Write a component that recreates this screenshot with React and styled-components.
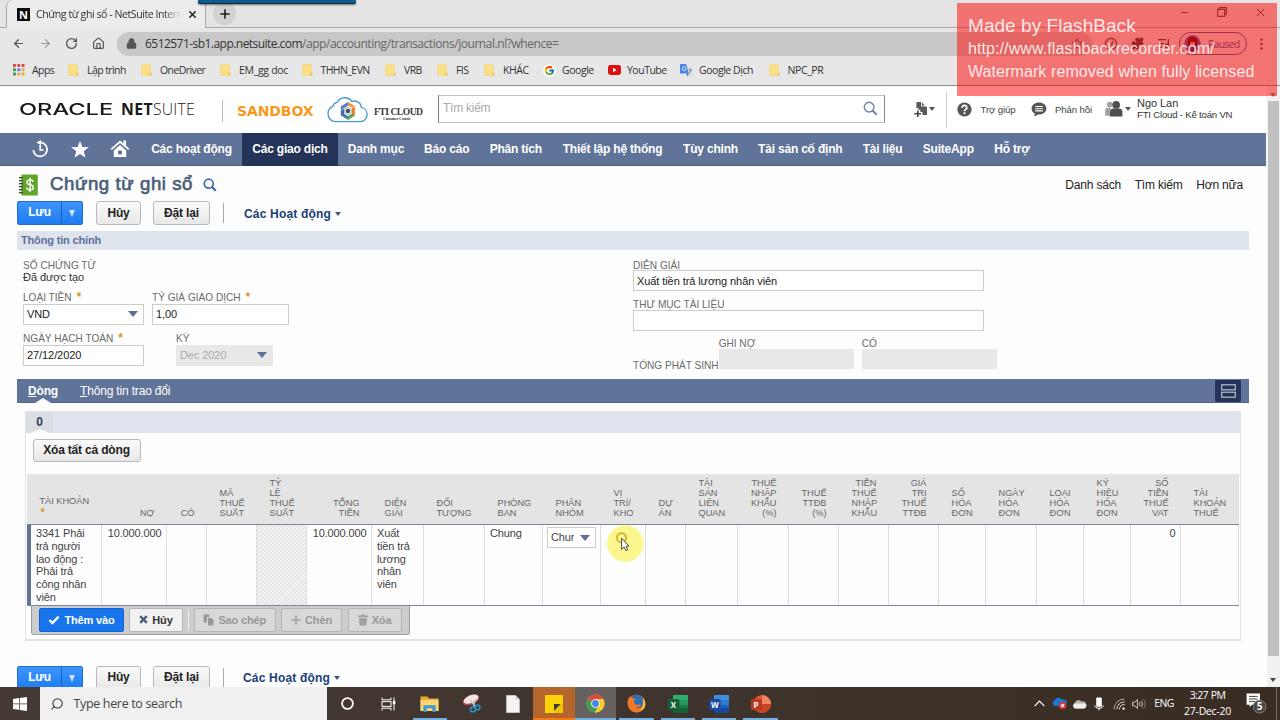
import React from 'react'
import styled, { createGlobalStyle } from 'styled-components'
import { ArrowLeft, ArrowRight, RotateCw, House, Lock, Plus, X, Star, Puzzle, ListMusic, Minus, Search } from 'lucide-react'
import { FcGoogle } from 'react-icons/fc'

const GlobalStyle = createGlobalStyle`
  * {
    box-sizing: border-box;
  }

  body {
    margin: 0;
    overflow: hidden;
    font-family: "Liberation Sans", Arial, sans-serif;
    font-size: 11px;
    color: #333;
    background-color: #fdfdfd;
  }

  svg {
    display: block;
    flex: none;
  }
`;

const Screen = styled.div`
  position: relative;
  width: 1280px;
  height: 720px;
  display: flex;
  flex-direction: column;
  overflow: hidden;
  white-space: nowrap;
`;

/* ---------- browser ---------- */

const Chrome = styled.div`
  height: 86px;
  flex: none;
  background-color: #e7e7e7;
  border-bottom: 1px solid #8c8c8c;
  font-family: "Open Sans", "Noto Sans", sans-serif;
  color: #333;
`;

const TabStrip = styled.div`
  height: 28px;
  display: flex;
  background-color: #e4e4e4;
`;

const StripLine = styled.div`
  width: ${(props) => props.$width};
  flex: ${(props) => (props.$width ? 'none' : 1)};
  display: flex;
  align-items: center;
  border-bottom: 1px solid #a9a9a9;
`;

const BrowserTab = styled.div`
  width: 200px;
  height: 28px;
  flex: none;
  display: flex;
  align-items: center;
  padding-left: 10px;
  border: 1px solid #a9a9a9;
  border-top: none;
  border-bottom: none;
  border-radius: 7px 7px 0 0;
  background-color: #ececec;
`;

const Favicon = styled.div`
  width: 13px;
  height: 13px;
  display: flex;
  align-items: center;
  justify-content: center;
  background-color: #0b0b0b;
  color: white;
  font: 700 11px "Open Sans", sans-serif;
`;

const TabTitle = styled.div`
  width: 145px;
  margin-left: 6px;
  overflow: hidden;
  font-size: 10.6px;
  letter-spacing: -0.46px;
  mask-image: linear-gradient(to right, black 88%, transparent 100%);
`;

const CloseTab = styled(X)`
  margin-left: 6px;
  color: #222;
`;

const NewTab = styled.div`
  width: 23px;
  height: 23px;
  margin-left: 7px;
  display: flex;
  align-items: center;
  justify-content: center;
  border-radius: 50%;
  background-color: #d2d2d2;
  color: #222;
`;

const WindowButtons = styled.div`
  margin-left: auto;
  padding: 0 13px 3px 0;
  display: flex;
  align-items: center;
  gap: 27px;
  color: #333;
`;

const AddressRow = styled.div`
  height: 30px;
  display: flex;
  align-items: center;
  padding: 1px 14px 0 12px;
  color: #555;
`;

const NavButtons = styled.div`
  width: 105px;
  display: flex;
  gap: 13.5px;
`;

const AddressBar = styled.div`
  width: 975px;
  height: 24px;
  display: flex;
  align-items: center;
  padding: 0 9px;
  border-radius: 12px;
  background-color: #c8c8c8;
  font-size: 12px;
`;

const Host = styled.span`
  width: 157px;
  margin-left: 8px;
  letter-spacing: -0.54px;
  color: #333;
`;

const UrlPath = styled.span`
  flex: 1;
  letter-spacing: -0.45px;
  color: #666;
`;

const Extensions = styled.div`
  margin-left: 12px;
  display: flex;
  align-items: center;
  gap: 13px;
  color: #444;
`;

const Profile = styled.div`
  width: 68px;
  height: 23px;
  display: flex;
  align-items: center;
  gap: 7px;
  padding-left: 4px;
  margin-left: -4px;
  border: 1px solid #4a5a9a;
  border-radius: 12px;
  font-size: 10.5px;
  letter-spacing: -0.75px;
  color: #44549a;
`;

const Bookmarks = styled.div`
  height: 26px;
  display: flex;
  align-items: center;
  padding: 0 0 2px 13px;
  font-size: 10.5px;
`;

const Bookmark = styled.div`
  width: ${(props) => props.$width}px;
  flex: none;
  display: flex;
  align-items: center;
  letter-spacing: ${(props) => props.$spacing || -0.58}px;
`;

const BookmarkIcon = styled.div`
  width: 19px;
  flex: none;
`;

const RoundIcon = styled.div`
  width: 13px;
  height: 13px;
  display: flex;
  align-items: center;
  justify-content: center;
  border-radius: 50%;
  background-color: white;
`;

/* ---------- page header ---------- */

const Body = styled.div`
  height: 601px;
  flex: none;
  display: flex;
`;

const Page = styled.div`
  width: 1266px;
  flex: none;
  overflow: hidden;
`;

const Scrollbar = styled.div`
  flex: 1;
  margin-left: 1px;
  display: flex;
  flex-direction: column;
  align-items: center;
  justify-content: space-between;
  padding: 7px 1px 5px 0;
  background-color: #f1f1f1;
`;

const Thumb = styled.div`
  width: 11px;
  height: 555px;
  background-color: #c1c1c1;
`;

const Header = styled.div`
  height: 47px;
  display: flex;
  align-items: center;
  padding-left: 19px;
  background-color: white;
`;

const Oracle = styled.div`
  width: 94px;
  margin-right: 8px;
  padding-bottom: 1px;
  font: 500 16px Inter, sans-serif;
  color: #1b1b1b;
  transform: scaleX(1.475);
  transform-origin: left center;
`;

const NetSuite = styled.div`
  width: 101px;
  padding-bottom: 1px;
  font: 300 15.8px "Open Sans", sans-serif;
  letter-spacing: 0.15px;
  color: #1b1b1b;

  b {
    font-weight: 700;
    letter-spacing: 0.4px;
  }
`;

const Divider = styled.div`
  width: 1px;
  height: ${(props) => props.$height}px;
  margin: ${(props) => props.$margin};
  background-color: ${(props) => props.$color || '#bbb'};
`;

const Sandbox = styled.div`
  width: 89px;
  font: 700 14px "DejaVu Sans", Verdana, sans-serif;
  letter-spacing: -0.1px;
  padding-top: 3px;
  color: #f79a1c;
`;

const Fti = styled.div`
  width: 63px;
  margin-left: 5px;
  padding-top: 9px;
  font: 700 9.6px/10px "Liberation Serif", serif;
  letter-spacing: -0.5px;
  color: #3a3a3a;

  small {
    display: block;
    font-size: 4px;
    line-height: 4px;
    padding-left: 9px;
    letter-spacing: -0.2px;
  }
`;

const SearchBox = styled.div`
  width: 447px;
  height: 28px;
  margin: 0 0 2px 1px;
  display: flex;
  align-items: center;
  justify-content: space-between;
  padding: 0 6px 1px 4px;
  border: 1px solid #bdbdbd;
  border-left-color: #777;
  border-right-color: #888;
  font-size: 12px;
  letter-spacing: -0.25px;
  color: #aaa;
`;

const HeaderItem = styled.div`
  width: ${(props) => props.$width}px;
  display: flex;
  align-items: center;
  gap: ${(props) => props.$gap}px;
  padding-bottom: 1px;
  font-size: 9.6px;
  letter-spacing: -0.1px;
  color: #444;
`;

const Role = styled.div`
  padding-bottom: 1px;
  font-size: 9.6px;
  line-height: 12px;
  letter-spacing: -0.2px;
  color: #333;

  div {
    font-size: 11px;
    letter-spacing: -0.05px;
  }
`;

const Caret = styled.span`
  border: ${(props) => props.$size || 3}px solid transparent;
  border-top: ${(props) => (props.$size || 3) + 1}px solid ${(props) => props.$color || '#555'};
  border-bottom: none;
`;

const MenuBar = styled.div`
  height: 33px;
  display: flex;
  background-color: #607499;
  border-bottom: 1px solid #4f607f;
`;

const MenuIcons = styled.div`
  width: 141px;
  display: flex;
  align-items: center;
  padding-left: 31px;
  gap: 21.5px;
`;

const MenuItem = styled.div`
  width: ${(props) => props.$width}px;
  height: 33px;
  display: flex;
  align-items: center;
  justify-content: center;
  padding-bottom: 1px;
  font-size: 12px;
  font-weight: 700;
  letter-spacing: -0.2px;
  color: white;
  background-color: ${(props) => (props.$active ? '#243358' : 'transparent')};
`;

/* ---------- record form ---------- */

const Content = styled.div`
  padding: 0 17px;
`;

const TitleRow = styled.div`
  height: 35px;
  display: flex;
  align-items: center;
  padding: 2px 6px 0 2px;
`;

const Title = styled.h1`
  width: 153px;
  margin: 0 0 0 12px;
  padding-bottom: 1px;
  font-size: 18.6px;
  font-weight: 400;
  letter-spacing: 0.57px;
  -webkit-text-stroke: 0.7px #4d5f79;
  color: #4d5f79;
`;

const TitleLinks = styled.div`
  margin-left: auto;
  display: flex;
  gap: 13.5px;
  font-size: 12px;
  letter-spacing: -0.16px;
  color: #222;
`;

const ButtonRow = styled.div`
  height: 24px;
  display: flex;
  align-items: center;
`;

const SaveButton = styled.div`
  width: 66px;
  height: 24px;
  display: flex;
  border: 1px solid #1f6fd6;
  border-radius: 2px;
  background: linear-gradient(#3d94fb, #1f7cf0);
  color: white;
  font-size: 12px;
  letter-spacing: -0.2px;
  font-weight: 700;
  line-height: 21px;
`;

const SaveLabel = styled.span`
  width: 44px;
  text-align: center;
  border-right: 1px solid #1b62c4;
`;

const SaveCaret = styled.span`
  flex: 1;
  display: flex;
  align-items: center;
  justify-content: center;

  span {
    border-top-width: 7px;
  }
`;

const Button = styled.div`
  width: ${(props) => props.$width}px;
  height: ${(props) => props.$height || 24}px;
  display: flex;
  align-items: center;
  justify-content: center;
  padding-bottom: 1px;
  border: 1px solid #b9b9b9;
  border-radius: 3px;
  background: linear-gradient(#fafafa, #e8e8e8);
  font-size: 12px;
  font-weight: 700;
  letter-spacing: -0.18px;
  color: #222;
`;

const ActionsMenu = styled.div`
  display: flex;
  align-items: center;
  gap: 4px;
  padding-top: 2px;
  font-size: 12px;
  font-weight: 700;
  letter-spacing: 0.18px;
  color: #1b3f77;
`;

const SectionTitle = styled.div`
  height: 19px;
  margin-top: 6px;
  padding-left: 4px;
  line-height: 18px;
  background-color: #dfe3ee;
  font-size: 11px;
  font-weight: 700;
  letter-spacing: -0.16px;
  color: #5b7197;
`;

const Form = styled.div`
  height: 129px;
  display: flex;
  padding: 10px 0 0 6px;
`;

const FormLeft = styled.div`
  width: 610px;
`;

const FieldRow = styled.div`
  display: flex;
  align-items: flex-end;
  gap: ${(props) => props.$gap}px;
  margin-bottom: ${(props) => props.$bottom}px;
`;

const Label = styled.div`
  height: ${(props) => props.$height || 12}px;
  line-height: 11px;
  font-size: 10.1px;
  color: #6b6b6b;

  i {
    margin-left: 2px;
    font-style: normal;
    font-weight: 700;
    font-size: 12px;
    line-height: 10px;
    color: #d39b2d;
  }
`;

const Value = styled.div`
  line-height: 12px;
  height: 20.5px;
  font-size: 11px;
  letter-spacing: -0.05px;
`;

const Input = styled.div`
  width: ${(props) => props.$width}px;
  height: ${(props) => props.$height || 21}px;
  display: flex;
  align-items: center;
  justify-content: space-between;
  padding: 0 5px 0 3px;
  border: 1px solid ${(props) => (props.$disabled ? '#e8e8e8' : '#ccc')};
  background-color: ${(props) => (props.$disabled ? '#e8e8e8' : 'white')};
  font-size: 11px;
  letter-spacing: -0.08px;
  color: ${(props) => (props.$disabled ? '#aaa' : '#222')};
`;

const FieldGap = styled.div`
  width: ${(props) => props.$width || 0}px;
  height: ${(props) => props.$height || 0}px;
  flex: none;
`;

/* ---------- sublist ---------- */

const TabBar = styled.div`
  height: 24px;
  display: flex;
  align-items: center;
  padding: 0 8px 0 11px;
  background-color: #607499;
  border-bottom: 1px solid #51658a;
  color: white;
`;

const SubTab = styled.div`
  position: relative;
  height: 24px;
  width: ${(props) => props.$width}px;
  line-height: 24px;
  font-size: 12px;
  letter-spacing: -0.17px;
  font-weight: ${(props) => (props.$active ? 700 : 400)};

  &::after {
    content: '';
    display: ${(props) => (props.$active ? 'block' : 'none')};
    position: absolute;
    left: 7px;
    bottom: 0;
    border: 8px solid transparent;
    border-top: none;
    border-bottom: 5px solid #fdfdfd;
  }
`;

const LayoutButton = styled.div`
  width: 26px;
  height: 22px;
  margin-left: auto;
  display: flex;
  align-items: center;
  justify-content: center;
  border-radius: 2px;
  background-color: #243358;
`;

const Sublist = styled.div`
  width: 1216px;
  height: 230px;
  margin: 8px 0 0 8px;
  border: 1px solid #e2e2e2;
  border-bottom-width: 2px;
`;

const CountBar = styled.div`
  height: 21px;
  background-color: #dfe4ef;
`;

const Count = styled.div`
  position: relative;
  width: 27px;
  height: 21px;
  line-height: 20px;
  text-align: center;
  background-color: #dcdee6;
  font-size: 12px;
  font-weight: 700;
  color: #333d55;

  &::after {
    content: '';
    position: absolute;
    left: 5px;
    bottom: 0;
    border: 9px solid transparent;
    border-top: none;
    border-bottom: 4px solid #fdfdfd;
  }
`;

const SublistTools = styled.div`
  height: 41px;
  padding: 6px 0 0 6.5px;
`;

const columns = '75px 65px 40px 50px 50px 65px 52px 61px 58px 58px 45px 40px 52px 51px 50px 50px 50px 47px 51px 47px 47px 50px 58px';

const HeadRow = styled.div`
  display: grid;
  grid-template-columns: ${columns};
  width: 1212px;
  height: 51px;
  margin-left: 1px;
  background-color: #e4e4e4;
  border-bottom: 1px solid #7c8798;
`;

const HeadCell = styled.div`
  align-self: end;
  padding: 0 12.5px 6px;
  font-size: 9.2px;
  line-height: 10px;
  text-align: ${(props) => (props.$right ? 'right' : 'left')};
  white-space: pre;
  color: #666;

  i {
    display: block;
    height: 12.5px;
    margin-left: 1px;
    font-style: normal;
    font-weight: 700;
    font-size: 11px;
    line-height: 12px;
    color: #d39b2d;
  }
`;

const DataRow = styled.div`
  display: grid;
  grid-template-columns: ${columns};
  width: 1212px;
  height: 81px;
  margin-left: 1px;
  background-color: #fdfdfd;
  border-bottom: 1px solid #7c8798;
`;

const DataCell = styled.div`
  padding: 2.2px 4.5px 0 5px;
  border-right: 1px solid #dedede;
  font-size: 11px;
  letter-spacing: -0.12px;
  line-height: 12.7px;
  white-space: pre;
  text-align: ${(props) => (props.$right ? 'right' : 'left')};
  color: #444;
  background: ${(props) => (props.$locked ? 'repeating-linear-gradient(135deg, #f4f4f4 0 1.4px, #e4e4e6 1.4px 2.8px)' : 'none')};

  &:first-child {
    border-left: 4px solid #607499;
  }
`;

const CellSelect = styled.div`
  width: 49px;
  height: 21px;
  margin-left: -1px;
  display: flex;
  align-items: center;
  justify-content: space-between;
  padding: 0 5px 0 3px;
  border: 1px solid #ccc;
  background-color: white;

  span:first-child {
    width: 23px;
    overflow: hidden;
  }
`;

const LineActions = styled.div`
  width: 379px;
  height: 29px;
  margin-left: 5px;
  display: flex;
  align-items: center;
  padding: 0 0 1px 7px;
  border: 1px solid #9a9ea6;
  border-top: none;
  border-radius: 0 0 3px 3px;
  background-color: #cdcdcd;
`;

const LineButton = styled.div`
  width: ${(props) => props.$width}px;
  height: 24px;
  margin-right: ${(props) => props.$gap || 5.5}px;
  display: flex;
  align-items: center;
  justify-content: center;
  gap: 4px;
  border: 1px solid ${(props) => (props.$primary ? '#0f62d3' : '#b5b5b5')};
  border-radius: 2px;
  background-color: ${(props) => (props.$primary ? '#1874ea' : props.$disabled ? '#d8d8d8' : '#f2f2f2')};
  font-size: 11px;
  font-weight: 700;
  letter-spacing: -0.15px;
  color: ${(props) => (props.$primary ? 'white' : props.$disabled ? '#999' : '#333')};
`;

const BottomRow = styled(ButtonRow)`
  margin-top: 25px;

  ${ActionsMenu} {
    padding: 0 0 1px;
    margin-left: -1px;
  }

  ${SaveLabel} {
    line-height: 20px;
  }

  ${Button} {
    padding-bottom: 2px;
  }
`;

/* ---------- taskbar ---------- */

const Taskbar = styled.div`
  height: 33px;
  flex: none;
  display: flex;
  background: linear-gradient(to right, #453a34, #3f352e 50%, #392c22);
  font-family: "Open Sans", "Noto Sans", sans-serif;
  color: white;
`;

const Start = styled.div`
  width: 40px;
  display: flex;
  align-items: center;
  justify-content: center;
`;

const TaskSearch = styled.div`
  width: 286.5px;
  display: flex;
  align-items: center;
  gap: 9.5px;
  padding-left: 10px;
  background-color: #f0f0f0;
  font-size: 12.5px;
  letter-spacing: -0.34px;
  color: #444;
`;

const FlippedSearch = styled(Search)`
  transform: scaleX(-1);
  color: #333;
`;

const Task = styled.div`
  width: ${(props) => (props.$open ? 34.35 : 41.35)}px;
  margin: ${(props) => (props.$open ? '0 3.5px' : 0)};
  display: flex;
  align-items: center;
  justify-content: center;
  background-color: ${(props) => props.$bg || 'transparent'};
  box-shadow: ${(props) => (props.$line ? `inset 0 -2px 0 ${props.$line}` : 'none')};
`;

const Tray = styled.div`
  width: 248px;
  margin: 0 3px 0 auto;
  display: flex;
  align-items: center;
  border-right: 1px solid #75695f;
  font-size: 10.5px;
`;

const TrayItem = styled.div`
  width: ${(props) => props.$width}px;
  flex: none;
  display: flex;
  align-items: center;
  justify-content: center;
  text-align: center;
  line-height: 15.5px;
  letter-spacing: ${(props) => props.$spacing || 0}px;
`;

const Clock = styled.div`
  width: 57px;
  flex: none;
  text-align: center;
  line-height: 15.5px;
  letter-spacing: -0.28px;

  div:first-child {
    letter-spacing: -0.68px;
    word-spacing: 1px;
  }
`;

/* ---------- overlays ---------- */

const RecorderBar = styled.div`
  position: absolute;
  left: 198px;
  top: 0;
  width: 158px;
  height: 4px;
  background-color: #0d5a8c;
  border-bottom: 1px solid #0b2d45;
  border-radius: 0 0 2px 2px;
  box-shadow: 0 1px 2px rgba(0, 0, 0, 0.5);
`;

const Watermark = styled.div`
  position: absolute;
  left: 957px;
  top: 3px;
  width: 320px;
  height: 93px;
  padding: 12px 0 0 11px;
  background-color: rgba(255, 0, 0, 0.5);
  color: rgba(255, 255, 255, 0.86);
  font-size: 16px;
  line-height: 23px;
  letter-spacing: 0.09px;

  div:first-child {
    font-size: 19px;
    line-height: 22px;
    letter-spacing: 0.05px;
  }
`;

const Pointer = styled.div`
  position: absolute;
  left: 606px;
  top: 525px;
`;

const Restore = () => (
  <svg width="10" height="10" viewBox="0 0 10 10" fill="none" stroke="currentColor" strokeWidth="1">
    <rect x="0.7" y="2.3" width="7" height="7" />
    <path d="M2.6 2.3 V0.6 H9.4 V7.4 H7.7" />
  </svg>
);

const Folder = () => (
  <svg width="11" height="12" viewBox="0 0 11 12">
    <rect x="0.5" y="0.5" width="9" height="11" rx="0.6" fill="#f9df87" stroke="#f1d27a" strokeWidth="0.6" />
    <path d="M8.4 9 L10.5 8 V12 H8 Z" fill="#efcb62" />
  </svg>
);

const Apps = () => (
  <svg width="12" height="12" viewBox="0 0 12 12">
    {['#e2483c', '#e2483c', '#e2483c', '#3b9a55', '#4a86e8', '#e9a93a', '#3b9a55', '#e9a93a', '#e9a93a'].map((fill, i) => (
      <rect key={i} x={(i % 3) * 4.3} y={Math.floor(i / 3) * 4.3} width="2.9" height="2.9" fill={fill} />
    ))}
  </svg>
);

const YouTube = () => (
  <svg width="13" height="10" viewBox="0 0 13 10">
    <rect width="13" height="10" rx="2.4" fill="#d90f0f" />
    <path d="M5 2.8 L8.6 5 L5 7.2 Z" fill="white" />
  </svg>
);

const Translate = () => (
  <svg width="13" height="13" viewBox="0 0 13 13">
    <path d="M5 3.4 H11.4 A0.8 0.8 0 0 1 12.2 4.2 V11.6 A0.8 0.8 0 0 1 11.4 12.4 H8 Z" fill="#d6dae0" />
    <path d="M0.8 0 H6.2 L8.8 9.6 H0.8 A0.8 0.8 0 0 1 0 8.8 V0.8 A0.8 0.8 0 0 1 0.8 0 Z" fill="#4a84e6" />
    <path d="M6.6 9.6 H8.8 L7.6 12.4 Z" fill="#2f5fc4" />
    <path d="M6 3.8 A2 2 0 1 0 6.2 5 H4.4" fill="none" stroke="#dfe8fa" strokeWidth="0.9" />
    <path d="M8.8 6 H11.6 M10.2 5 V6 M11 6 Q10.5 8 9.2 9" fill="none" stroke="#667" strokeWidth="0.7" />
  </svg>
);

const FtiCloud = () => (
  <svg width="43" height="26" viewBox="0 0 43 26">
    <path d="M9 24.6 A8 8 0 0 1 6.8 9.4 A5.4 5.4 0 0 1 11 5.4 A8.8 8.8 0 0 1 26 4.6 A6.8 6.8 0 0 1 35.4 10.4 A7.2 7.2 0 0 1 34.6 24.6 Z" fill="white" stroke="#4f9bd0" strokeWidth="1.4" />
    <path d="M22 5 L28.6 9 L26 10.6 L22 8.2 Z" fill="#ef8f2f" />
    <path d="M28.9 9.4 V18 L25.8 19.8 V11.3 Z" fill="#ef7d2c" />
    <path d="M22 5 L14.8 9.2 V13.2 L18 11.2 L22 8.8 Z" fill="#5c7fc0" />
    <path d="M14.8 13.6 V18.2 L21.8 22.8 V19.2 L18 16.8 V11.8 Z" fill="#3f6fb8" />
    <path d="M22 23 L28.8 18.6 L25.6 17 L20 20.4 Z" fill="#45a45b" />
    <path d="M21.9 10.2 L25.2 12.1 V15.9 L21.9 17.8 L18.6 15.9 V12.1 Z" fill="white" stroke="#888" strokeWidth="0.7" />
    <circle cx="21.9" cy="14" r="2.2" fill="#3b4a5e" />
  </svg>
);

const Magnifier = ({ size, color, width }) => (
  <svg width={size} height={size} viewBox="0 0 14 14" fill="none" stroke={color}>
    <circle cx="5.7" cy="5.7" r="4.5" strokeWidth={width} />
    <path d="M8.9 8.9 L12.8 12.8" strokeWidth={width + 0.5} />
  </svg>
);

const NewDoc = () => (
  <svg width="14" height="15" viewBox="0 0 14 15" fill="#5a5a5a">
    <path d="M2.4 0 H7 V4.6 H9 V10 H6.4 V8 H4.6 V6.2 H2.4 Z" />
    <path d="M7.8 0.2 L10.8 3.6 H7.8 Z" />
    <path d="M7.6 4.4 H13 V13 H8.4 V10 H7.6 Z" />
    <path d="M3 8.6 H4.6 V10.9 H7 V12.5 H4.6 V15 H3 V12.5 H0.4 V10.9 H3 Z" fill="#444" />
  </svg>
);

const Help = () => (
  <svg width="15" height="15" viewBox="0 0 15 15">
    <circle cx="7.5" cy="7.5" r="7.1" fill="#555" />
    <path d="M5.2 5.8 A2.3 2.2 0 1 1 8.6 7.5 Q7.5 8.1 7.5 9.2" fill="none" stroke="white" strokeWidth="1.7" />
    <rect x="6.6" y="10.3" width="1.8" height="1.8" fill="white" />
  </svg>
);

const Feedback = () => (
  <svg width="16" height="15" viewBox="0 0 16 15">
    <path d="M8 0.6 C12.2 0.6 15.4 3.2 15.4 6.6 C15.4 10 12.2 12.6 8 12.6 L7 12.6 Q5 14.2 3.2 14.2 Q3.9 12.9 3.6 11.6 C1.6 10.5 0.6 8.7 0.6 6.6 C0.6 3.2 3.8 0.6 8 0.6 Z" fill="#555" />
    <path d="M4.2 4.5 H11.8 M4.2 6.7 H11.8 M4.2 8.9 H11.8" stroke="white" strokeWidth="1.1" />
  </svg>
);

const People = () => (
  <svg width="18" height="16" viewBox="0 0 18 16">
    <circle cx="4.8" cy="3.6" r="2.9" fill="#a2a2a2" />
    <path d="M0.2 14.8 V8.8 Q0.2 6.8 2.4 6.8 H5.4 V14.8 Z" fill="#a2a2a2" />
    <circle cx="11.2" cy="3.9" r="3.8" fill="#4f4f4f" />
    <path d="M5 15.4 V10.6 Q5 8 7.6 7.6 H14.8 Q17.4 8 17.4 10.6 V15.4 Z" fill="#4f4f4f" />
  </svg>
);

const HistoryIcon = () => (
  <svg width="18" height="18" viewBox="0 0 18 18" fill="none" stroke="white" strokeWidth="1.7">
    <path d="M9 2.4 A7 7 0 1 1 2.2 10.2" />
    <path d="M9.2 5 V10 H12.6" />
    <path d="M10 0 L5.4 2.5 L10 5 Z" fill="white" stroke="none" />
  </svg>
);

const StarIcon = () => (
  <svg width="18" height="17" viewBox="0 0 18 17">
    <path d="M9 0 L11.3 6 L17.8 6.3 L12.7 10.3 L14.5 16.6 L9 13 L3.5 16.6 L5.3 10.3 L0.2 6.3 L6.7 6 Z" fill="white" />
  </svg>
);

const HomeIcon = () => (
  <svg width="20" height="18" viewBox="0 0 20 18">
    <path d="M1.2 9.4 L10 1.8 L18.8 9.4" fill="none" stroke="white" strokeWidth="1.9" />
    <path d="M13.4 0.6 H16 V6 L13.4 3.8 Z" fill="white" />
    <path d="M10 5 L16.2 10.4 V17 H3.8 V10.4 Z" fill="white" />
    <rect x="8" y="10.6" width="4" height="3.8" fill="#607499" />
  </svg>
);

const JournalIcon = () => (
  <svg width="19" height="22" viewBox="0 0 19 22">
    <rect x="2.4" y="0.4" width="16.4" height="21.2" rx="1" fill="#63a52a" />
    {[3, 6, 9, 12, 15, 18].map((y) => (
      <rect key={y} x="0" y={y} width="4" height="1.3" fill="#3c4a30" />
    ))}
    <path d="M14.2 7.8 Q13.8 5.9 11 5.9 Q8 5.9 8 8.2 Q8 10.3 11.1 10.8 Q14.4 11.4 14.4 13.6 Q14.4 15.8 11.1 15.8 Q7.9 15.8 7.6 13.6 M11.1 3.8 V18" fill="none" stroke="white" strokeWidth="1.4" />
  </svg>
);

const LayoutIcon = () => (
  <svg width="15" height="14" viewBox="0 0 15 14" fill="#243358" stroke="#b8c0cf" strokeWidth="1.2">
    <rect x="0.7" y="0.8" width="13.6" height="5" />
    <rect x="0.7" y="8.2" width="13.6" height="5" />
  </svg>
);

const Check = () => (
  <svg width="12" height="10" viewBox="0 0 12 10">
    <path d="M1.4 5 L4.4 8 L10.6 1.6" fill="none" stroke="white" strokeWidth="2.3" />
  </svg>
);

const Cross = () => (
  <svg width="9" height="9" viewBox="0 0 9 9">
    <path d="M1.2 1.2 L7.8 7.8 M7.8 1.2 L1.2 7.8" stroke="#4d5f79" strokeWidth="2.4" />
  </svg>
);

const CopyIcon = () => (
  <svg width="11" height="12" viewBox="0 0 11 12" fill="#999">
    <path d="M0.5 0.5 H6.5 V3 H4 V8.5 H0.5 Z" />
    <path d="M5 4 H8.4 L10.5 6 V11.5 H5 Z" />
  </svg>
);

const PlusIcon = () => (
  <svg width="10" height="10" viewBox="0 0 10 10">
    <path d="M5 0.5 V9.5 M0.5 5 H9.5" stroke="#aaa" strokeWidth="2.2" />
  </svg>
);

const Trash = () => (
  <svg width="10" height="12" viewBox="0 0 10 12" fill="#a0a0a0">
    <path d="M3.4 0.6 H6.6 V1.6 H10 V3.2 H0 V1.6 H3.4 Z" />
    <path d="M1 4.2 H9 L8.4 11.6 H1.6 Z" />
  </svg>
);

const WindowsLogo = () => (
  <svg width="14" height="14" viewBox="0 0 14 14" fill="white">
    <path d="M0 2 L6 1.1 V6.6 H0 Z M6.7 1 L14 0 V6.6 H6.7 Z M0 7.3 H6 V12.8 L0 12 Z M6.7 7.3 H14 V14 L6.7 13 Z" />
  </svg>
);

const TaskView = () => (
  <svg width="15" height="14" viewBox="0 0 15 14" fill="none" stroke="white" strokeWidth="1">
    <path d="M1 0.5 V2.8 H10 V0.5 M1 13.5 V11.2 H10 V13.5" />
    <rect x="1" y="4.6" width="9" height="4.8" />
    <path d="M13 0.5 V13.5" />
    <rect x="12.3" y="4.6" width="1.6" height="2" fill="white" />
  </svg>
);

const Explorer = () => (
  <svg width="19" height="16" viewBox="0 0 19 16">
    <path d="M0.5 0.6 H7.6 L9 2.6 H18.5 V15 H0.5 Z" fill="#e9a534" />
    <path d="M0.5 3.8 H18.5 V15 H0.5 Z" fill="#fbd773" />
    <path d="M3.4 16 V9.2 H15.6 V16 H12.4 V12.2 H6.6 V16 Z" fill="#3f97d3" />
  </svg>
);

const Snip = () => (
  <svg width="19" height="19" viewBox="0 0 19 19">
    <ellipse cx="9" cy="6" rx="8.6" ry="4.6" transform="rotate(-22 9 6)" fill="#b8434b" />
    <ellipse cx="9" cy="5.2" rx="7.8" ry="3.9" transform="rotate(-22 9 5.2)" fill="#f4e4e4" />
    <path d="M8 5.6 L13 12.2 M13.4 5 L11.4 12" stroke="#c6c9cf" strokeWidth="1.4" />
    <circle cx="10.8" cy="15.4" r="2.4" fill="none" stroke="#2c8fc6" strokeWidth="1.6" />
    <circle cx="15.6" cy="13.4" r="2.3" fill="none" stroke="#2c8fc6" strokeWidth="1.6" />
  </svg>
);

const Document = () => (
  <svg width="14" height="18" viewBox="0 0 14 18">
    <path d="M0.3 0.3 H9.6 L13.7 4.4 V17.7 H0.3 Z" fill="#f4f4f4" />
    <path d="M9.6 0.3 V4.4 H13.7 Z" fill="#c6c6c6" />
  </svg>
);

const Sticky = () => (
  <svg width="18" height="18" viewBox="0 0 18 18">
    <rect width="18" height="18" fill="#fcd209" />
    <path d="M9 9 H16 L9 16 Z" fill="#3d3a34" />
    <path d="M18 9 V18 H9 V16 L16 9 Z" fill="#f3c00a" />
  </svg>
);

const ChromeLogo = () => (
  <svg width="19" height="19" viewBox="0 0 20 20">
    <circle cx="10" cy="10" r="9.4" fill="#f6cc2f" />
    <path d="M10 10 L1.86 5.3 A9.4 9.4 0 0 1 18.14 5.3 H10 Z" fill="#dd4a3c" />
    <path d="M10 10 L1.86 5.3 A9.4 9.4 0 0 0 9.2 19.4 L13.8 12.2 Z" fill="#3f9f57" />
    <path d="M10 5.3 H18.14 A9.4 9.4 0 0 1 9.2 19.4 L14 12.4 Z" fill="#f6cc2f" />
    <circle cx="10" cy="10" r="4.6" fill="white" />
    <circle cx="10" cy="10" r="3.6" fill="#4a83ea" />
  </svg>
);

const Firefox = () => (
  <svg width="19" height="19" viewBox="0 0 19 19">
    <circle cx="9.5" cy="9.5" r="9" fill="#e8662a" />
    <circle cx="9.8" cy="7.6" r="6.8" fill="#2c6fb4" />
    <path d="M0.6 8 Q1 3.6 3.4 2.2 Q4 3.8 6 4.2 Q8.2 4.4 8.6 5.4 Q6.2 6.6 7 8.8 Q8.4 11.4 11.6 10.4 Q13.4 9.8 14 11 Q11.6 14.2 8 13.4 Q12 16 15.6 12.4 Q17.4 9.6 15.8 4 Q18.8 7 18.4 10.6 Q16.8 18 9.5 18.5 Q1.2 17.8 0.6 8 Z" fill="#ee7a28" />
    <path d="M15.8 4 Q18.8 7 18.4 10.6 Q17.4 15.6 13 17.6 Q17 12.8 15.8 4 Z" fill="#f8c53a" />
  </svg>
);

const officeThemes = {
  X: ['#1f7a45', '#2fae6c', '#15613a'],
  W: ['#1c5fb8', '#3c8ee0', '#174a9c'],
};

const OfficeBadge = styled.div`
  position: relative;
  width: 20px;
  height: 18px;

  span {
    position: absolute;
    left: 0;
    top: 4px;
    width: 11px;
    height: 11px;
    border-radius: 1px;
    background-color: ${(props) => props.$color};
    color: white;
    font: 700 8px/11px "Open Sans", sans-serif;
    text-align: center;
  }
`;

const Office = ({ letter }) => {
  const [dark, light, deep] = officeThemes[letter];
  return (
    <OfficeBadge $color={deep}>
      <svg width="20" height="18" viewBox="0 0 20 18">
        <rect x="5" y="0" width="15" height="18" rx="1" fill={dark} />
        <rect x="5" y="0" width="15" height="5" rx="1" fill={light} />
        <rect x="12" y="5" width="8" height="5" fill={light} opacity="0.6" />
        <rect x="5" y="13" width="15" height="5" rx="1" fill={deep} />
      </svg>
      <span>{letter}</span>
    </OfficeBadge>
  );
};

const PowerPoint = () => (
  <OfficeBadge $color="#b93a20">
    <svg width="20" height="18" viewBox="0 0 20 18">
      <circle cx="11" cy="9" r="9" fill="#e0573a" />
      <path d="M11 0 A9 9 0 0 1 20 9 H11 Z" fill="#f0855f" />
      <path d="M2 9 H20 A9 9 0 0 1 2 9 Z" fill="#c94425" />
    </svg>
    <span>P</span>
  </OfficeBadge>
);

const OneDrive = () => (
  <svg width="15" height="13" viewBox="0 0 15 13">
    <path d="M3 9 A2.8 2.8 0 0 1 2.6 3.6 A4.2 4.2 0 0 1 10 2.6 A3.2 3.2 0 0 1 12.6 9 Z" fill="#1a78d0" />
    <circle cx="10.6" cy="8.6" r="3.8" fill="#d32f36" />
    <path d="M9 7 L12.2 10.2 M12.2 7 L9 10.2" stroke="white" strokeWidth="1.1" />
  </svg>
);

const Cloud = () => (
  <svg width="15" height="10" viewBox="0 0 15 10">
    <path d="M3 9.4 A2.8 2.8 0 0 1 2.6 4 A4.2 4.2 0 0 1 9.8 2.6 A3.4 3.4 0 0 1 12 9.4 Z" fill="#b5b2af" />
    <path d="M3 9.4 A2.6 2.6 0 0 1 3.4 4.6 L12.6 4.4 A2.6 2.6 0 0 1 12 9.4 Z" fill="#eee" />
  </svg>
);

const Mic = () => (
  <svg width="10" height="14" viewBox="0 0 10 14">
    <rect x="2.2" y="0.4" width="5.6" height="9.4" rx="0.8" fill="white" />
    <path d="M0.8 8.4 Q0.8 11.2 5 11.2 Q9.2 11.2 9.2 8.4 M5 11 V13.4" fill="none" stroke="white" strokeWidth="1" />
  </svg>
);

const Wifi = () => (
  <svg width="13" height="12" viewBox="0 0 13 12" fill="none" stroke="#ddd" strokeWidth="1">
    <path d="M1 11.4 A10.4 10.4 0 0 1 11.6 1" opacity="0.7" />
    <path d="M3.8 11.4 A7.8 7.8 0 0 1 11.6 3.8" />
    <path d="M6.4 11.4 A5.2 5.2 0 0 1 11.6 6.4" />
    <circle cx="10.6" cy="10.6" r="0.9" fill="#ddd" />
  </svg>
);

const Speaker = () => (
  <svg width="15" height="12" viewBox="0 0 15 12" fill="none" stroke="#ddd" strokeWidth="0.9">
    <path d="M0.6 4.2 H2.6 L5.4 1.6 V10.4 L2.6 7.8 H0.6 Z" />
    <path d="M7.4 4.2 Q8.8 6 7.4 7.8 M9.4 2.8 Q11.6 6 9.4 9.2" />
    <path d="M11.6 1.2 Q14.8 6 11.6 10.8" opacity="0.5" />
  </svg>
);

const Notifications = () => (
  <svg width="21" height="21" viewBox="0 0 21 21">
    <path d="M0.6 0.6 H14 V11.8 H6 L3.6 14 V11.8 H0.6 Z" fill="white" />
    <path d="M3 3.4 H11.6 M3 6 H11.6 M3 8.6 H9" stroke="#3a2d24" strokeWidth="0.9" />
    <circle cx="13.6" cy="13.6" r="6.4" fill="#4b4742" stroke="#8b8682" strokeWidth="0.8" />
    <text x="13.6" y="17.2" fontSize="10" fontWeight="700" textAnchor="middle" fill="white">5</text>
  </svg>
);

const Avatar = () => (
  <svg width="17" height="17" viewBox="0 0 17 17">
    <circle cx="8.5" cy="8.5" r="8.3" fill="#5563b5" />
    <path d="M3.4 9 Q3 1.6 8.6 1.6 Q14 1.6 13.6 9 L12.4 11 H4.6 Z" fill="#5d0a1c" />
    <rect x="6" y="7" width="5" height="5" rx="1.6" fill="#e7a79c" />
    <path d="M2.6 14.2 Q4 12 8.5 12 Q13 12 14.4 14.2 Q11.6 16.8 8.5 16.8 Q5 16.8 2.6 14.2 Z" fill="#303a74" />
  </svg>
);

const bookmarks = [
  { label: 'Apps', width: 55, icon: <Apps /> },
  { label: 'Lập trình', width: 73, icon: <Folder /> },
  { label: 'OneDriver', width: 79, icon: <Folder /> },
  { label: 'EM_gg doc', width: 81.5, icon: <Folder />, spacing: -0.31 },
  { label: 'THHN_EVN', width: 83.5, icon: <Folder /> },
  { label: 'VRB', width: 52, icon: <Folder /> },
  { label: 'FIS', width: 47, icon: <Folder /> },
  { label: 'KHÁC', width: 59, icon: <Folder />, spacing: -0.4 },
  { label: 'Google', width: 65, icon: <RoundIcon><FcGoogle size={11} /></RoundIcon>, spacing: -0.45 },
  { label: 'YouTube', width: 72, icon: <YouTube />, spacing: -0.5 },
  { label: 'Google Dịch', width: 88.5, icon: <Translate />, spacing: -0.45 },
  { label: 'NPC_PR', width: 60, icon: <Folder />, spacing: -0.4 },
];

const menu = [
  ['Các hoạt động', 101],
  ['Các giao dịch', 96],
  ['Danh mục', 76],
  ['Báo cáo', 65.5],
  ['Phân tích', 72.5],
  ['Thiết lập hệ thống', 121],
  ['Tùy chỉnh', 75],
  ['Tài sản cố định', 104.5],
  ['Tài liệu', 60],
  ['SuiteApp', 71.5],
  ['Hỗ trợ', 56],
];

const lineColumns = [
  { head: 'TÀI KHOẢN', required: true, value: '3341 Phải\ntrả người\nlao động :\nPhải trả\ncông nhân\nviên' },
  { head: 'NỢ', right: true, value: '10.000.000' },
  { head: 'CÓ', right: true },
  { head: 'MÃ\nTHUẾ\nSUẤT' },
  { head: 'TỶ\nLỆ\nTHUẾ\nSUẤT', locked: true },
  { head: 'TỔNG\nTIỀN', right: true, value: '10.000.000' },
  { head: 'DIỄN\nGIẢI', value: 'Xuất\ntiền trả\nlương\nnhân\nviên' },
  { head: 'ĐỐI\nTƯỢNG' },
  { head: 'PHÒNG\nBAN', value: 'Chung' },
  { head: 'PHÂN\nNHÓM', select: 'Chung' },
  { head: 'VỊ\nTRÍ/\nKHO' },
  { head: 'DỰ\nÁN' },
  { head: 'TÀI\nSẢN\nLIÊN\nQUAN' },
  { head: 'THUẾ\nNHẬP\nKHẨU\n(%)', right: true },
  { head: 'THUẾ\nTTĐB\n(%)', right: true },
  { head: 'TIỀN\nTHUẾ\nNHẬP\nKHẨU', right: true },
  { head: 'GIÁ\nTRỊ\nTHUẾ\nTTĐB', right: true },
  { head: 'SỐ\nHÓA\nĐƠN' },
  { head: 'NGÀY\nHÓA\nĐƠN' },
  { head: 'LOẠI\nHÓA\nĐƠN' },
  { head: 'KÝ\nHIỆU\nHÓA\nĐƠN' },
  { head: 'SỐ\nTIỀN\nTHUẾ\nVAT', right: true, value: '0' },
  { head: 'TÀI\nKHOẢN\nTHUẾ' },
];

const RecordButtons = () => (
  <>
    <SaveButton>
      <SaveLabel>Lưu</SaveLabel>
      <SaveCaret>
        <Caret $color="#cfe2fb" $size={3.5} />
      </SaveCaret>
    </SaveButton>
    <FieldGap $width={13} />
    <Button $width={45}>Hủy</Button>
    <FieldGap $width={12} />
    <Button $width={57}>Đặt lại</Button>
    <Divider $height={20} $margin="0 20px 0 13px" $color="#aaa" />
    <ActionsMenu>
      Các Hoạt động
      <Caret $color="#42567b" />
    </ActionsMenu>
  </>
);

const Browser = () => (
  <Chrome>
    <TabStrip>
      <StripLine $width="6px" />
      <BrowserTab>
        <Favicon>N</Favicon>
        <TabTitle>Chứng từ ghi sổ - NetSuite Internal</TabTitle>
        <CloseTab size={11} strokeWidth={3.2} />
      </BrowserTab>
      <StripLine>
        <NewTab>
          <Plus size={14} strokeWidth={2.8} />
        </NewTab>
        <WindowButtons>
          <Minus size={11} strokeWidth={1.8} />
          <Restore />
          <X size={13} strokeWidth={1.7} />
        </WindowButtons>
      </StripLine>
    </TabStrip>
    <AddressRow>
      <NavButtons>
        <ArrowLeft size={13} strokeWidth={2.3} />
        <ArrowRight size={13} strokeWidth={2.1} color="#999" />
        <RotateCw size={13} strokeWidth={2.4} />
        <House size={13} strokeWidth={2.2} />
      </NavButtons>
      <AddressBar>
        <Lock size={11} strokeWidth={2.6} fill="#555" />
        <Host>6512571-sb1.app.netsuite.com</Host>
        <UrlPath>/app/accounting/transactions/journal.nl?whence=</UrlPath>
        <Star size={12} strokeWidth={2} />
      </AddressBar>
      <Extensions>
        <svg width="14" height="14" viewBox="0 0 14 14">
          <circle cx="7" cy="7" r="5.6" fill="none" stroke="#666" strokeWidth="1.6" />
          <path d="M4 4.6 L10 9.6 M9.6 4 L5 10" stroke="#777" strokeWidth="1.6" />
        </svg>
        <Puzzle size={13} fill="#444" />
        <ListMusic size={13} strokeWidth={2.4} />
        <Profile>
          <Avatar />
          Paused
        </Profile>
        <svg width="3" height="12" viewBox="0 0 3 12" fill="#444">
          <circle cx="1.5" cy="1.6" r="1.2" />
          <circle cx="1.5" cy="6" r="1.2" />
          <circle cx="1.5" cy="10.4" r="1.2" />
        </svg>
      </Extensions>
    </AddressRow>
    <Bookmarks>
      {bookmarks.map((item) => (
        <Bookmark key={item.label} $width={item.width} $spacing={item.spacing}>
          <BookmarkIcon>{item.icon}</BookmarkIcon>
          {item.label}
        </Bookmark>
      ))}
    </Bookmarks>
  </Chrome>
);

const PageHeader = () => (
  <>
    <Header>
      <Oracle>ORACLE</Oracle>
      <NetSuite><b>NET</b>SUITE</NetSuite>
      <Divider $height={22} $margin="2px 14px 0 0" />
      <Sandbox>SANDBOX</Sandbox>
      <FtiCloud />
      <Fti>
        FTI CLOUD
        <small>Customer Centric</small>
      </Fti>
      <SearchBox>
        Tìm kiếm
        <Magnifier size={15} color="#6c83aa" width={1.3} />
      </SearchBox>
      <FieldGap $width={29} />
      <HeaderItem $width={32} $gap={1}>
        <NewDoc />
        <Caret />
      </HeaderItem>
      <Divider $height={35} $margin="0 10px 0 0" $color="#ccc" />
      <HeaderItem $width={74} $gap={8.5}>
        <Help />
        Trợ giúp
      </HeaderItem>
      <HeaderItem $width={74} $gap={8}>
        <Feedback />
        Phản hồi
      </HeaderItem>
      <HeaderItem $width={32} $gap={2}>
        <People />
        <Caret />
      </HeaderItem>
      <Role>
        <div>Ngo Lan</div>
        FTI Cloud - Kế toán VN
      </Role>
    </Header>
    <MenuBar>
      <MenuIcons>
        <HistoryIcon />
        <StarIcon />
        <HomeIcon />
      </MenuIcons>
      {menu.map(([label, width]) => (
        <MenuItem key={label} $width={width} $active={label === 'Các giao dịch'}>{label}</MenuItem>
      ))}
    </MenuBar>
  </>
);

const MainFields = () => (
  <Form>
    <FormLeft>
      <Label $height={11}>SỐ CHỨNG TỪ</Label>
      <Value>Đã được tạo</Value>
      <FieldRow $bottom={8} $gap={8}>
        <div>
          <Label>LOẠI TIỀN <i>*</i></Label>
          <Input $width={121}>VND <Caret $size={5} $color="#5b7197" /></Input>
        </div>
        <div>
          <Label>TỶ GIÁ GIAO DỊCH <i>*</i></Label>
          <Input $width={137}>1,00</Input>
        </div>
      </FieldRow>
      <FieldRow $bottom={0} $gap={32}>
        <div>
          <Label>NGÀY HẠCH TOÁN <i>*</i></Label>
          <Input $width={121}>27/12/2020</Input>
        </div>
        <div>
          <Label>KỲ</Label>
          <Input $width={97} $disabled>Dec 2020 <Caret $size={5} $color="#5b7197" /></Input>
        </div>
      </FieldRow>
    </FormLeft>
    <div>
      <Label $height={10}>DIỄN GIẢI</Label>
      <Input $width={350.5}>Xuất tiền trả lương nhân viên</Input>
      <FieldGap $height={8} />
      <Label $height={11}>THƯ MỤC TÀI LIỆU</Label>
      <Input $width={350.5} />
      <FieldGap $height={7} />
      <FieldRow $bottom={0} $gap={0}>
        <Label $height={9}>TỔNG PHÁT SINH</Label>
        <div>
          <Label $height={11}>GHI NỢ</Label>
          <Input $width={135} $height={20} $disabled />
        </div>
        <FieldGap $width={8} />
        <div>
          <Label $height={11}>CÓ</Label>
          <Input $width={135} $height={20} $disabled />
        </div>
      </FieldRow>
    </div>
  </Form>
);

const Lines = () => (
  <Sublist>
    <CountBar>
      <Count>0</Count>
    </CountBar>
    <SublistTools>
      <Button $width={108} $height={23}>Xóa tất cả dòng</Button>
    </SublistTools>
    <HeadRow>
      {lineColumns.map((col) => (
        <HeadCell key={col.head} $right={col.right}>
          {col.head}
          {col.required && <i>*</i>}
        </HeadCell>
      ))}
    </HeadRow>
    <DataRow>
      {lineColumns.map((col) => (
        <DataCell key={col.head} $right={col.right} $locked={col.locked}>
          {col.value}
          {col.select && (
            <CellSelect>
              <span>{col.select}</span>
              <Caret $size={5} $color="#5b7197" />
            </CellSelect>
          )}
        </DataCell>
      ))}
    </DataRow>
    <LineActions>
      <LineButton $width={85} $gap={5} $primary><Check /> Thêm vào</LineButton>
      <LineButton $width={54} $gap={5}><Cross /> Hủy</LineButton>
      <Divider $height={20} $margin="0 5px 0 0" $color="#f0f0f0" />
      <LineButton $width={81.5} $disabled><CopyIcon /> Sao chép</LineButton>
      <LineButton $width={61} $disabled><PlusIcon /> Chèn</LineButton>
      <LineButton $width={54} $disabled $gap={0}><Trash /> Xóa</LineButton>
    </LineActions>
  </Sublist>
);

const TaskbarRow = () => (
  <Taskbar>
    <Start><WindowsLogo /></Start>
    <TaskSearch>
      <FlippedSearch size={14} strokeWidth={1.8} />
      Type here to search
    </TaskSearch>
    <Task>
      <svg width="13" height="13" viewBox="0 0 13 13">
        <circle cx="6.5" cy="6.5" r="5.4" fill="none" stroke="white" strokeWidth="1.8" />
      </svg>
    </Task>
    <Task><TaskView /></Task>
    <Task $open $line="#76b0e0"><Explorer /></Task>
    <Task><Snip /></Task>
    <Task><Document /></Task>
    <Task $bg="#b4662d" $line="#f77b14"><Sticky /></Task>
    <Task $bg="#676260" $line="#76b0e0"><ChromeLogo /></Task>
    <Task $open $line="#76b0e0"><Firefox /></Task>
    <Task $open $line="#76b0e0"><Office letter="X" /></Task>
    <Task $open $line="#76b0e0"><Office letter="W" /></Task>
    <Task $open $line="#76b0e0"><PowerPoint /></Task>
    <Tray>
      <TrayItem $width={20}>
        <svg width="11" height="7" viewBox="0 0 11 7">
          <path d="M0.6 6.2 L5.5 1 L10.4 6.2" fill="none" stroke="white" strokeWidth="1.1" />
        </svg>
      </TrayItem>
      <TrayItem $width={20}><OneDrive /></TrayItem>
      <TrayItem $width={20}><Cloud /></TrayItem>
      <TrayItem $width={20}><Mic /></TrayItem>
      <TrayItem $width={20}><Wifi /></TrayItem>
      <TrayItem $width={20}><Speaker /></TrayItem>
      <TrayItem $width={30} $spacing={-0.7}>ENG</TrayItem>
      <Clock>
        <div>3:27 PM</div>
        <div>27-Dec-20</div>
      </Clock>
      <TrayItem $width={40}><Notifications /></TrayItem>
    </Tray>
  </Taskbar>
);

const App = () => {
  return (
    <Screen>
      <GlobalStyle />
      <Browser />
      <Body>
        <Page>
          <PageHeader />
          <Content>
            <TitleRow>
              <JournalIcon />
              <Title>Chứng từ ghi sổ</Title>
              <Magnifier size={14} color="#3f6cb0" width={1.7} />
              <TitleLinks>
                <span>Danh sách</span>
                <span>Tìm kiếm</span>
                <span>Hơn nữa</span>
              </TitleLinks>
            </TitleRow>
            <ButtonRow>
              <RecordButtons />
            </ButtonRow>
            <SectionTitle>Thông tin chính</SectionTitle>
            <MainFields />
            <TabBar>
              <SubTab $width={52} $active><u>D</u>òng</SubTab>
              <SubTab $width={100}><u>T</u>hông tin trao đổi</SubTab>
              <LayoutButton>
                <LayoutIcon />
              </LayoutButton>
            </TabBar>
            <Lines />
            <BottomRow>
              <RecordButtons />
            </BottomRow>
          </Content>
        </Page>
        <Scrollbar>
          <Caret $color="#888" />
          <Thumb />
          <FieldGap $height={14} />
          <Caret $color="#444" />
        </Scrollbar>
      </Body>
      <TaskbarRow />
      <RecorderBar />
      <Pointer>
        <svg width="38" height="38" viewBox="0 0 38 38">
          <circle cx="19.3" cy="18.6" r="18.3" fill="#fbf78e" />
          <circle cx="15.5" cy="12.8" r="4.6" fill="none" stroke="#d8b83c" strokeWidth="2.2" />
          <path d="M15.6 13.2 V24.4 L18.1 22 L20 25.6 L21.8 24.6 L20 21.2 L23 21 Z" fill="white" stroke="#333" strokeWidth="0.9" />
        </svg>
      </Pointer>
      <Watermark>
        <div>Made by FlashBack</div>
        <div>http://www.flashbackrecorder.com/</div>
        <div>Watermark removed when fully licensed</div>
      </Watermark>
    </Screen>
  )
}

export default App
